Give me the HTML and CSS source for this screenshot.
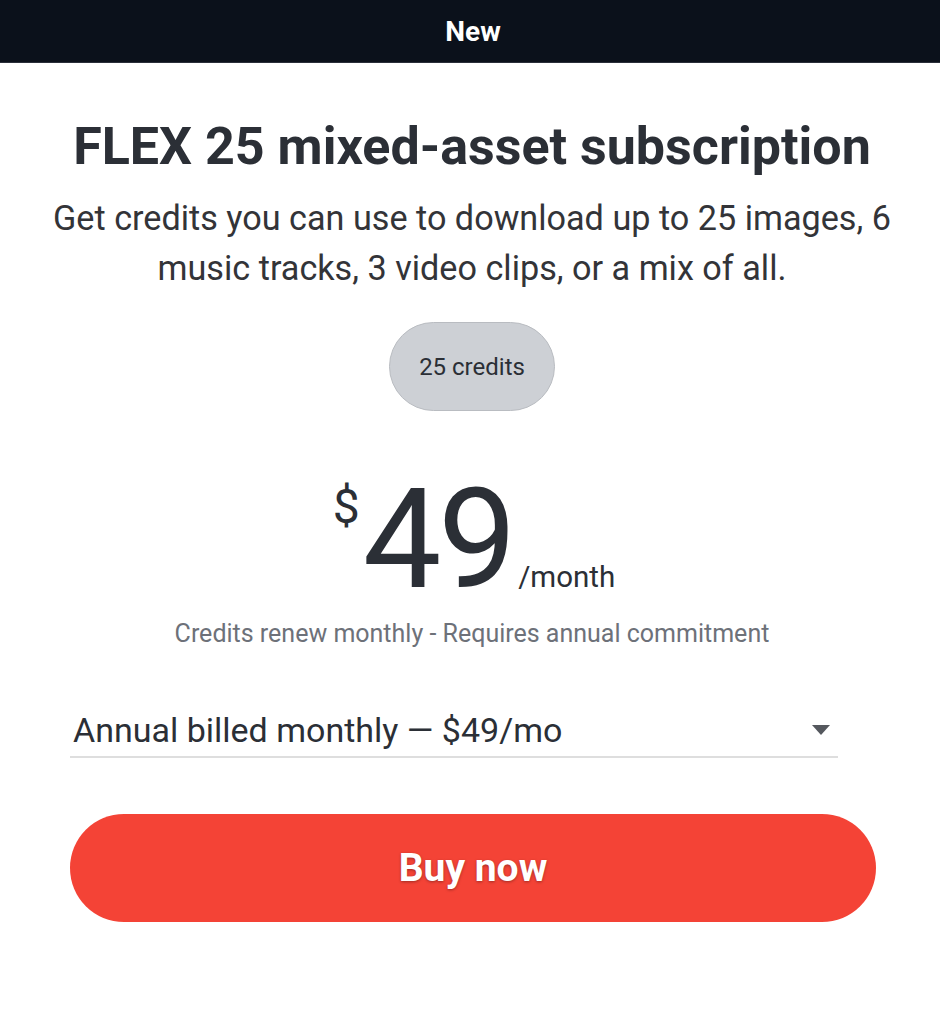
FILE: index.html
```html
<!DOCTYPE html>
<html>
<head>
<meta charset="utf-8">
<link rel="stylesheet" href="styles.css">
</head>
<body>
<div class="topbar">New</div>
<main class="card">
  <h1 class="title">FLEX 25 mixed-asset subscription</h1>
  <p class="desc">Get credits you can use to download up to 25 images, 6 music tracks, 3 video clips, or a mix of all.</p>
  <div class="pill">25 credits</div>
  <div class="price">
    <span class="cur">$</span><span class="amount">49</span><span class="per">/month</span>
  </div>
  <p class="note">Credits renew monthly - Requires annual commitment</p>
  <div class="select">
    <span class="select-text">Annual billed monthly — $49/mo</span>
    <span class="arrow"></span>
  </div>
  <button class="buy">Buy now</button>
</main>
</body>
</html>
```
FILE: styles.css
```css
html, body {
  margin: 0;
  padding: 0;
  background: #ffffff;
  font-family: Roboto, "Liberation Sans", Arial, sans-serif;
}
.topbar {
  height: 63px;
  background: #0b111b;
  color: #ffffff;
  font-weight: 700;
  font-size: 28px;
  display: flex;
  align-items: center;
  justify-content: center;
  border-bottom: 1px solid #2a2f3a;
  box-sizing: border-box;
  padding-left: 6px;
}
.card {
  display: flex;
  flex-direction: column;
  align-items: center;
  padding-left: 4px;
}
.title {
  margin: 54px 0 0;
  font-size: 52px;
  font-weight: 700;
  color: #2b2f36;
  line-height: 60px;
  white-space: nowrap;
}
.desc {
  margin: 16px 0 0;
  width: 880px;
  text-align: center;
  font-size: 34.2px;
  line-height: 50px;
  color: #333438;
}
.pill {
  margin-top: 29px;
  width: 164px;
  height: 87px;
  border-radius: 45px;
  background: #cdd0d5;
  border: 1px solid #b9bcc1;
  display: flex;
  align-items: center;
  justify-content: center;
  font-size: 24px;
  color: #2b2f36;
}
.price {
  margin-top: 68px;
  margin-left: 4px;
  display: flex;
  align-items: baseline;
  color: #2b2f36;
}
.cur {
  align-self: flex-start;
  font-size: 48px;
  line-height: 48px;
  margin-top: 4px;
  margin-right: 3px;
}
.amount {
  font-size: 140px;
  line-height: 120px;
  letter-spacing: -3.5px;
}
.per {
  font-size: 29.5px;
  line-height: 30px;
  margin-left: 5px;
}
.note {
  margin: 20px 0 0;
  font-size: 25px;
  color: #6d7179;
  line-height: 30px;
}
.select {
  margin-top: 61px;
  width: 768px;
  margin-left: -36px;
  display: flex;
  align-items: center;
  justify-content: space-between;
  border-bottom: 2px solid #dedede;
  padding: 0 0 6px 3px;
  box-sizing: border-box;
  height: 48px;
}
.select-text {
  font-size: 34px;
  line-height: 40px;
  color: #2b2f36;
}
.arrow {
  width: 0;
  height: 0;
  border-left: 9px solid transparent;
  border-right: 9px solid transparent;
  border-top: 10px solid #55585e;
  margin-right: 8px;
}
.buy {
  margin-top: 56px;
  width: 806px;
  height: 108px;
  border: none;
  border-radius: 54px;
  background: #f44336;
  color: #ffffff;
  font-family: Roboto, "Liberation Sans", Arial, sans-serif;
  font-size: 39px;
  font-weight: 700;
  text-shadow: 0 1px 3px rgba(0,0,0,0.35);
  margin-left: 2px;
}
```
